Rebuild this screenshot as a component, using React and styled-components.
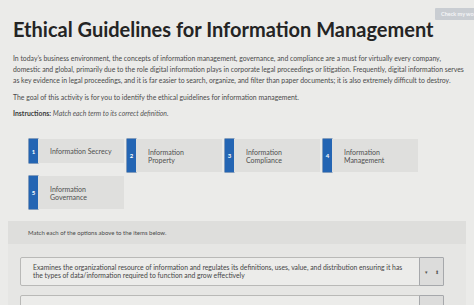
import React from "react";
import styled, { createGlobalStyle } from "styled-components";

const Global = createGlobalStyle`
  html, body { margin: 0; padding: 0; }
  body {
    width: 474px; height: 305px; overflow: hidden;
    background: #ebebe9;
    font-family: Lato, "Liberation Sans", sans-serif;
    color: #3a3a3a;
  }
`;

const Page = styled.div`
  position: relative;
  padding: 17px 0 0 13px;
`;

const CheckButton = styled.button`
  position: absolute;
  top: 8px; right: -8px;
  height: 12px; width: 47px;
  border: none; border-radius: 1px;
  background: #c9cdd2;
  color: #f4f5f7;
  font: 700 5.5px Lato, sans-serif;
  padding: 0 0 0 6px;
  text-align: left;
  white-space: nowrap;
  overflow: hidden;
`;

const Title = styled.h1`
  margin: 0 0 12px;
  font: 700 20px/24px Lato, "Liberation Sans", sans-serif;
  color: #242424;
  white-space: nowrap;
`;

const Para = styled.p`
  margin: 0 0 ${p => p.$mb ?? 6}px;
  font-size: 6.85px;
  line-height: 11px;
  color: #4a4a4a;
  white-space: nowrap;
`;

const Instructions = styled.p`
  margin: 0;
  font-size: 6.85px;
  line-height: 11px;
  color: #3a3a3a;
  b { font-weight: 700; }
  i { color: #555; }
`;

const Options = styled.div`
  display: flex;
  flex-wrap: wrap;
  align-items: flex-start;
  width: 390px;
  margin: 20px 0 0 16px;
  gap: 4px 3px;
`;

const Option = styled.div`
  display: flex;
  width: 95px;
  height: ${p => (p.$tall ? 33 : 24)}px;
`;

const Tab = styled.div`
  width: 9px;
  flex: none;
  background: #2465b3;
  color: #fff;
  font-weight: 700;
  font-size: 6px;
  display: flex;
  align-items: center;
  justify-content: center;
  box-shadow: 0 0 0 0.5px #1b4f90;
`;

const Label = styled.div`
  flex: 1;
  background: #dfdfdd;
  padding: 0 0 0 12px;
  display: flex;
  align-items: center;
  font-size: 7px;
  line-height: 8px;
  color: #505050;
`;

const Panel = styled.div`
  margin: 12px 0 0 -5px;
  width: 458px;
  background: #e6e6e4;
`;

const PanelHead = styled.div`
  background: #dededc;
  padding: 6px 0 6px 20px;
  font-size: 6px;
  line-height: 11px;
  color: #4a4a4a;
`;

const PanelBody = styled.div`
  padding: 13px 0 0 12px;
  display: flex;
  flex-direction: column;
  gap: 9px;
  height: 60px;
`;

const Answer = styled.div`
  display: flex;
  width: 424px;
  height: 29px;
  border: 1px solid #b9b9b7;
  border-radius: 2px;
  background: #ececea;
  box-sizing: border-box;
  flex: none;
`;

const AnswerText = styled.div`
  flex: 1;
  padding: 5px 0 0 12px;
  font-size: 6.8px;
  line-height: 8px;
  color: #454545;
  white-space: nowrap;
`;

const Select = styled.div`
  width: 25px;
  flex: none;
  border: 1.5px solid #a6a8ab;
  border-radius: 1px;
  background: #dcdcdb;
  display: flex;
  align-items: center;
  justify-content: space-between;
  padding: 0 4px 0 5px;
  box-sizing: border-box;
  margin: -1px -1px -1px 0;
  font-size: 5px;
  color: #555;
`;

const options = [
  { n: 1, label: ["Information Secrecy"] },
  { n: 2, label: ["Information", "Property"] },
  { n: 3, label: ["Information", "Compliance"] },
  { n: 4, label: ["Information", "Management"] },
  { n: 5, label: ["Information", "Governance"] },
];

export default function App() {
  return (
    <>
      <Global />
      <Page>
        <CheckButton>Check my work</CheckButton>
        <Title>Ethical Guidelines for Information Management</Title>
        <Para>
          In today’s business environment, the concepts of information management, governance, and compliance are a must for virtually every company,
          <br />
          domestic and global, primarily due to the role digital information plays in corporate legal proceedings or litigation. Frequently, digital information serves
          <br />
          as key evidence in legal proceedings, and it is far easier to search, organize, and filter than paper documents; it is also extremely difficult to destroy.
        </Para>
        <Para $mb={5}>The goal of this activity is for you to identify the ethical guidelines for information management.</Para>
        <Instructions>
          <b>Instructions:</b> <i>Match each term to its correct definition.</i>
        </Instructions>
        <Options>
          {options.map(o => (
            <Option key={o.n} $tall={o.label.length > 1}>
              <Tab>{o.n}</Tab>
              <Label>
                <div>
                  {o.label.map((l, i) => (
                    <div key={i}>{l}</div>
                  ))}
                </div>
              </Label>
            </Option>
          ))}
        </Options>
        <Panel>
          <PanelHead>Match each of the options above to the items below.</PanelHead>
          <PanelBody>
            <Answer>
              <AnswerText>
                Examines the organizational resource of information and regulates its definitions, uses, value, and distribution ensuring it has
                <br />
                the types of data/information required to function and grow effectively
              </AnswerText>
              <Select>
                <span>▾</span>
                <span>⬍</span>
              </Select>
            </Answer>
            <Answer>
              <AnswerText />
              <Select />
            </Answer>
          </PanelBody>
        </Panel>
      </Page>
    </>
  );
}
